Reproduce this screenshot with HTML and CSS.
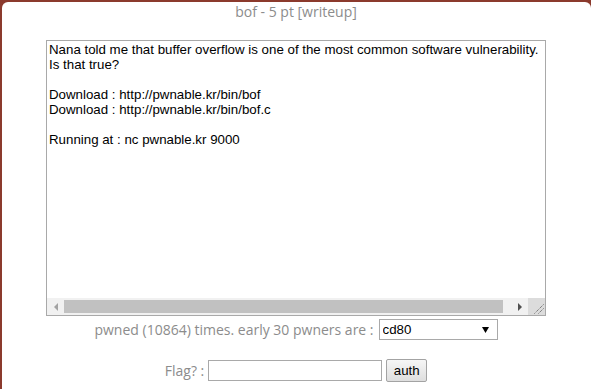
FILE: index.html
```html
<!DOCTYPE html>
<html lang="en">
<head>
    <meta charset="UTF-8">
    <title>bof - 5 pt</title>
    <link rel="stylesheet" href="styles.css">
</head>
<body>
    <div class="panel">
        <div class="title">bof - 5 pt [writeup]</div>
        <!-- challenge description -->
        <div class="desc-box">
            <textarea class="desc" wrap="off" readonly>Nana told me that buffer overflow is one of the most common software vulnerability. 
Is that true?

Download : http://pwnable.kr/bin/bof
Download : http://pwnable.kr/bin/bof.c

Running at : nc pwnable.kr 9000
</textarea>
            <div class="hscroll">
                <span class="sb-btn">
                    <svg width="4" height="8" viewBox="0 0 4 8"><polygon points="4,0 4,8 0,4" fill="#a3a3a3"/></svg>
                </span>
                <span class="sb-track"><span class="sb-thumb"></span></span>
                <span class="sb-btn">
                    <svg width="4" height="8" viewBox="0 0 4 8"><polygon points="0,0 0,8 4,4" fill="#505050"/></svg>
                </span>
                <span class="sb-corner">
                    <svg width="17" height="17" viewBox="0 0 17 17"><path d="M15.5 6.5 L6.5 15.5 M15.5 10.5 L10.5 15.5" stroke="#555" stroke-width="1" stroke-dasharray="1 1"/></svg>
                </span>
            </div>
        </div>
        <div class="row">
            <span class="label">pwned (10864) times. early 30 pwners are :</span>
            <select class="pwners">
                <option>cd80</option>
            </select>
        </div>
        <!-- flag form -->
        <form class="row flag-row">
            <span class="label">Flag? :</span>
            <input type="text" class="flag" name="flag">
            <button type="button" class="auth">auth</button>
        </form>
    </div>
</body>
</html>
```

FILE: styles.css
```css
html, body {
    height: 100%;
}
body {
    margin: 0;
    background-color: #8b3a2d;
    overflow: hidden;
}
.panel {
    box-sizing: border-box;
    height: calc(100% - 2px);
    margin: 2px 0 0 2px;
    padding-right: 1px;
    background: #ffffff;
    border-radius: 6px 6px 0 0;
    display: flex;
    flex-direction: column;
    align-items: center;
    font-family: 'Open Sans', sans-serif;
    color: #8c8c8c;
}
.title {
    font-size: 14px;
    line-height: 20px;
    margin-bottom: 18px;
}
.desc-box {
    box-sizing: border-box;
    width: 500px;
    height: 276px;
    border: 1px solid #a9a9a9;
    display: flex;
    flex-direction: column;
}
.desc {
    flex: 1;
    margin: 0;
    padding: 1px 2px;
    border: none;
    font-family: 'Liberation Sans', Arial, sans-serif;
    font-size: 13.3px;
    line-height: 15px;
    color: #000;
    resize: none;
    outline: none;
    overflow: hidden;
}
.hscroll {
    display: flex;
    height: 17px;
    background: #f1f1f1;
}
.sb-btn {
    width: 17px;
    display: flex;
    align-items: center;
    justify-content: center;
}
.sb-track {
    flex: 1;
    padding: 2px 8px 2px 0;
}
.sb-thumb {
    display: block;
    height: 100%;
    background: #c1c1c1;
}
.sb-corner {
    width: 17px;
    background: #dcdcdc;
}
.sb-corner svg {
    display: block;
}
.row {
    display: flex;
    align-items: center;
    gap: 5px;
    margin-top: 3px;
    font-size: 14px;
}
.flag-row {
    margin: 19px 0 0;
    gap: 4px;
}
.pwners {
    box-sizing: border-box;
    width: 119px;
    height: 21px;
    padding: 0 3px;
    border: 1px solid #a9a9a9;
    border-radius: 0;
    appearance: none;
    background: #fff url("data:image/svg+xml;utf8,<svg xmlns='http://www.w3.org/2000/svg' width='7' height='6'><polygon points='0,0 7,0 3.5,6' fill='%23000'/></svg>") no-repeat right 8px center;
    font-family: 'Liberation Sans', Arial, sans-serif;
    font-size: 13.3px;
    color: #000;
}
.flag {
    box-sizing: border-box;
    width: 174px;
    height: 21px;
    margin: 0;
    border: 1px solid #a9a9a9;
    padding: 1px 3px;
    font-family: 'Liberation Sans', Arial, sans-serif;
    font-size: 13.3px;
}
.auth {
    box-sizing: border-box;
    width: 41px;
    height: 23px;
    border: 1px solid #a3a3a3;
    border-radius: 2px;
    background: linear-gradient(#f6f6f6, #dedede);
    font-family: 'Liberation Sans', Arial, sans-serif;
    font-size: 13.3px;
    color: #000;
    padding: 0;
}
```
